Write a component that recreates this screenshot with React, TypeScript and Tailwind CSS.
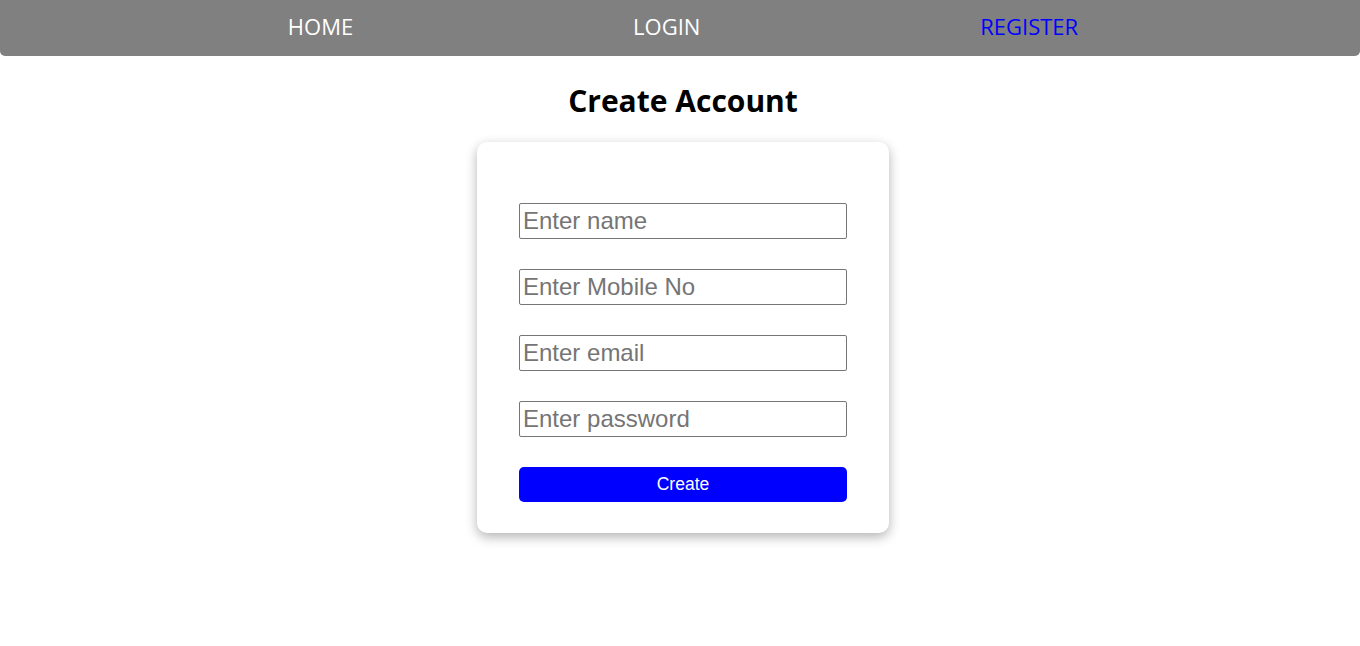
export default function App() {
  const fields = ["Enter name", "Enter Mobile No", "Enter email", "Enter password"];

  return (
    <div className="min-h-screen bg-white">
      <nav className="h-14 bg-[#808080] rounded-b-[5px] flex items-center justify-evenly pl-[8px] pr-[2px] pb-[3px] font-['Open_Sans',sans-serif] text-[22px]">
        <a className="text-white">HOME</a>
        <a className="text-white">LOGIN</a>
        <a className="text-[#0000ff]">REGISTER</a>
      </nav>

      <main className="pl-[6px]">
        <h1 className="mt-[25px] text-center text-[30px] leading-[40px] font-bold text-black font-['Open_Sans',sans-serif]">
          Create Account
        </h1>

        <div className="mx-auto mt-[21px] w-[412px] rounded-[10px] bg-white shadow-[0_4px_12px_rgba(0,0,0,0.3)] px-[42px] pt-[61px] pb-[31px]">
          <form className="flex flex-col gap-[30px] font-['Liberation_Sans',Arial,sans-serif]">
            {fields.map((f) => (
              <input
                key={f}
                type={f === "Enter password" ? "password" : "text"}
                placeholder={f}
                className="h-9 w-full rounded-[2px] border border-[#767676] px-[3px] text-[24px] placeholder:text-[#757575] outline-none"
              />
            ))}
            <button
              type="button"
              className="h-[35px] w-full rounded-[5px] bg-[#0000ff] text-white text-[17.5px]"
            >
              Create
            </button>
          </form>
        </div>
      </main>
    </div>
  );
}
